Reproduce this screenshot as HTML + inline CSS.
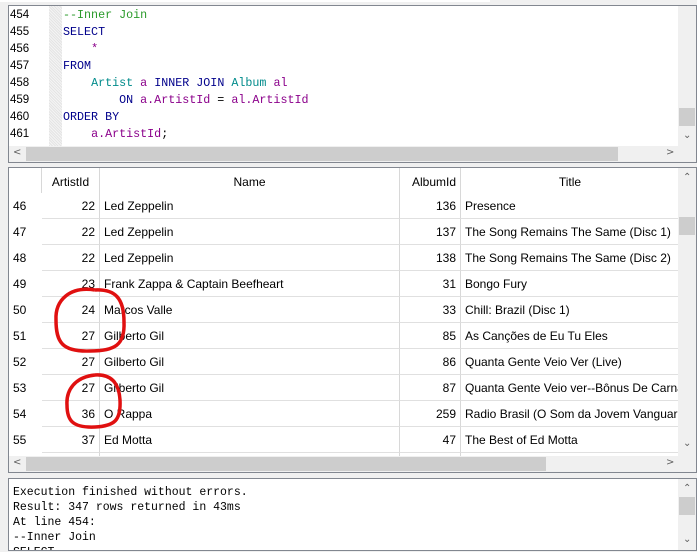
<!DOCTYPE html>
<html><head><style>
*{margin:0;padding:0;box-sizing:border-box}
body{width:697px;height:552px;background:#f0f0f0;position:relative;overflow:hidden;font-family:"Liberation Sans",sans-serif}
.p{position:absolute;background:#fff;border:1px solid #828790}
.a{position:absolute}
.code{font-family:"Liberation Mono",monospace;font-size:11.7px;white-space:pre;line-height:17px}
.ln{position:absolute;left:1px;font-family:"Liberation Sans",sans-serif;font-size:11.5px;color:#000}
.kw{color:#00008b}.id{color:#008b8b}.al{color:#8b008b}.cm{color:#2a9a2a}
.sb{position:absolute;background:#f0f0f0}
.th{position:absolute;background:#cdcdcd}
.ar{position:absolute;font-size:10px;color:#606060;font-family:"DejaVu Sans",sans-serif}
.row{position:absolute;left:0;height:26px;font-size:12px;line-height:26px}
.c{position:absolute;top:0;height:26px;border-right:1px solid #d8d8d8;border-bottom:1px solid #e0e0e0;padding:0 4px;white-space:nowrap;overflow:hidden}
.r{text-align:right}
.msg{font-family:"Liberation Mono",monospace;font-size:11.5px;line-height:15px;white-space:pre}
</style></head><body>
<div class="a" style="left:0;top:0;width:490px;height:2px;background:#fff"></div>
<!-- editor -->
<div class="p" style="left:8px;top:5px;width:689px;height:158px;overflow:hidden">
 <div class="a" style="left:0;top:0;width:40px;height:140px;background:#fff"></div>
 <div class="a" style="left:40px;top:0;width:13px;height:140px;background:repeating-linear-gradient(45deg,#e4e4e4 0 1px,#f4f4f4 1px 2px)"></div>
 <div class="a" style="top:1px;left:0;width:669px">
  <div class="ln" style="top:0;line-height:17px">454<br>455<br>456<br>457<br>458<br>459<br>460<br>461</div>
  <div class="a code" style="left:54px;top:0"><span class="cm">--Inner Join</span>
<span class="kw">SELECT</span>
    <span class="al">*</span>
<span class="kw">FROM</span>
    <span class="id">Artist</span> <span class="al">a</span> <span class="kw">INNER JOIN</span> <span class="id">Album</span> <span class="al">al</span>
        <span class="kw">ON</span> <span class="al">a.ArtistId</span> = <span class="al">al.ArtistId</span>
<span class="kw">ORDER BY</span>
    <span class="al">a.ArtistId</span>;</div>
 </div>
 <div class="sb" style="left:669px;top:0;width:18px;height:140px"><div class="th" style="left:1px;top:102px;width:16px;height:18px"></div><div class="ar" style="left:5px;top:124px">&#8964;</div></div>
 <div class="sb" style="left:0;top:140px;width:687px;height:16px"><div class="th" style="left:17px;top:1px;width:592px;height:14px"></div><div class="ar" style="left:4px;top:1px">&lt;</div><div class="ar" style="left:657px;top:1px">&gt;</div></div>
</div>
<!-- grid -->
<div class="p" style="left:8px;top:167px;width:689px;height:306px;overflow:hidden">
 <div class="a" style="left:0;top:0;width:669px;height:25px;font-size:12px;line-height:28px">
  <div class="c" style="left:0;width:33px;height:25px;border-bottom:none"></div>
  <div class="c" style="left:33px;width:58px;height:25px;border-bottom:none;text-align:center">ArtistId</div>
  <div class="c" style="left:91px;width:300px;height:25px;border-bottom:none;text-align:center">Name</div>
  <div class="c" style="left:391px;width:61px;height:25px;border-bottom:none;text-align:right">AlbumId</div>
  <div class="c" style="left:452px;width:218px;height:25px;border-bottom:none;text-align:center;border-right:none">Title</div>
 </div>
 <div id="rows" class="a" style="left:0;top:25px;width:669px;height:263px;overflow:hidden"></div>
 <div class="sb" style="left:669px;top:0;width:18px;height:288px"><div class="ar" style="left:5px;top:4px">&#8963;</div><div class="th" style="left:1px;top:49px;width:16px;height:18px"></div><div class="ar" style="left:5px;top:270px">&#8964;</div></div>
 <div class="sb" style="left:0;top:288px;width:687px;height:16px"><div class="th" style="left:17px;top:1px;width:520px;height:14px"></div><div class="ar" style="left:4px;top:1px">&lt;</div><div class="ar" style="left:657px;top:1px">&gt;</div></div>
</div>
<!-- messages -->
<div class="p" style="left:8px;top:478px;width:689px;height:73px;overflow:hidden">
 <div class="a msg" style="left:4px;top:6px">Execution finished without errors.
Result: 347 rows returned in 43ms
At line 454:
--Inner Join
SELECT</div>
 <div class="sb" style="left:669px;top:0;width:18px;height:72px"><div class="ar" style="left:5px;top:4px">&#8963;</div><div class="th" style="left:1px;top:18px;width:16px;height:18px"></div><div class="ar" style="left:5px;top:55px">&#8964;</div></div>
</div>
<svg class="a" style="left:0;top:0" width="697" height="552">
 <path d="M95 290 C70 286 55 300 56 320 C56 342 62 352 90 351 C115 351 125 345 124 322 C124 298 115 289 95 290" fill="none" stroke="#e01010" stroke-width="3.5"/>
 <path d="M95 375 C75 377 66 390 67 405 C67 420 72 428 95 427 C115 426 121 420 120 400 C119 384 112 374 95 375" fill="none" stroke="#e01010" stroke-width="3.5"/>
</svg>
<script>
var d=[[46,22,"Led Zeppelin",136,"Presence"],[47,22,"Led Zeppelin",137,"The Song Remains The Same (Disc 1)"],[48,22,"Led Zeppelin",138,"The Song Remains The Same (Disc 2)"],[49,23,"Frank Zappa &amp; Captain Beefheart",31,"Bongo Fury"],[50,24,"Marcos Valle",33,"Chill: Brazil (Disc 1)"],[51,27,"Gilberto Gil",85,"As Canções de Eu Tu Eles"],[52,27,"Gilberto Gil",86,"Quanta Gente Veio Ver (Live)"],[53,27,"Gilberto Gil",87,"Quanta Gente Veio ver--Bônus De Carnaval"],[54,36,"O Rappa",259,"Radio Brasil (O Som da Jovem Vanguarda)"],[55,37,"Ed Motta",47,"The Best of Ed Motta"],[56,38,"Banda Black Rio",48,"x"]];
var h="";d.forEach(function(r,i){h+='<div class="row" style="top:'+(i*26)+'px;width:669px"><div class="c" style="left:0;width:33px;border-bottom:none;border-right:none">'+r[0]+'</div><div class="c r" style="left:33px;width:58px">'+r[1]+'</div><div class="c" style="left:91px;width:300px">'+r[2]+'</div><div class="c r" style="left:391px;width:61px">'+r[3]+'</div><div class="c" style="left:452px;width:218px;border-right:none;padding-right:0">'+r[4]+'</div></div>';});
document.getElementById("rows").innerHTML=h;
</script>
</body></html>
